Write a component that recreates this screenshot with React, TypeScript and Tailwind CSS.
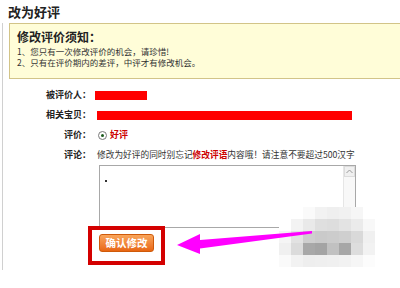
const mosaic = [
  ["#ffffff", "#ffffff", "#fafafa", "#f2f2f2", "#efefef", "#f1f1f1", "#f6f6f6", "#ffffff"],
  ["#ffffff", "#f3f3f3", "#e9e9e9", "#dfdfdf", "#dddddd", "#e3e3e3", "#ebebeb", "#f8f8f8"],
  ["#f5f5f5", "#e2e2e2", "#cecece", "#cacaca", "#cccccc", "#cfcfcf", "#d9d9d9", "#f0f0f0"],
  ["#f0f0f0", "#dbdbdb", "#a8a8a8", "#a4a4a4", "#c1c1c1", "#a7a7a7", "#dddddd", "#f2f2f2"],
  ["#fafafa", "#f2f2f2", "#eeeeee", "#efefef", "#f0f0f0", "#f2f2f2", "#f6f6f6", "#fcfcfc"],
];

function FormRow({ label, children }: { label: string; children: React.ReactNode }) {
  return (
    <div className="flex h-[20px] items-center">
      <span className="w-[88px] shrink-0 text-right text-[9px] font-bold leading-[12px] text-[#222]">
        {label}
      </span>
      {children}
    </div>
  );
}

export default function App() {
  return (
    <div className="relative h-[288px] w-[400px] overflow-hidden bg-white font-['Noto_Sans_CJK_SC','Noto_Sans',sans-serif] text-[#333]">
      <h1 className="h-[23px] pl-[8px] pt-[4px] text-[13px] font-bold leading-[16px] text-[#222]">
        改为好评
      </h1>

      <div className="ml-[2px] border-l border-[#d0d0d0] pb-[5px]">
        <div className="ml-[6px] h-[56px] border-y border-l border-[#d2c488] bg-[#fffdd8] pl-[7px] pt-[6px]">
          <p className="text-[12px] font-bold leading-[14px] text-[#222]">修改评价须知：</p>
          <p className="mt-[1px] text-[8.5px] leading-[12px]">1、您只有一次修改评价的机会，请珍惜!</p>
          <p className="-mt-[1px] text-[8.5px] leading-[12px]">2、只有在评价期内的差评，中评才有修改机会。</p>
        </div>

        <div className="mt-[6px]">
          <FormRow label="被评价人：">
            <div className="ml-[4px] h-[9px] w-[52px] bg-[#ff0000]" />
          </FormRow>
          <FormRow label="相关宝贝：">
            <div className="ml-[6px] h-[9px] w-[255px] bg-[#ff0000]" />
          </FormRow>
          <FormRow label="评价：">
            <span className="ml-[7px] flex h-[9px] w-[9px] items-center justify-center rounded-full border border-[#7a7a7a] bg-white">
              <span className="h-[3px] w-[3px] rounded-full bg-[#1d5b1d]" />
            </span>
            <span className="ml-[3px] text-[9px] font-bold leading-[12px] text-[#cc0000]">好评</span>
          </FormRow>
          <FormRow label="评论：">
            <span className="ml-[6px] whitespace-nowrap text-[8.7px] leading-[12px]">
              修改为好评的同时别忘记<b className="text-[#cc0000]">修改评语</b>内容哦！请注意不要超过500汉字
            </span>
          </FormRow>

          <div className="ml-[96px] flex h-[63px] w-[257px] border border-[#a8a8a8] bg-white">
            <div className="flex-1 pl-[5px] pt-[14px]">
              <div className="h-[2px] w-[2px] bg-[#333]" />
            </div>
            <div className="w-[12px] border-l border-[#e6e6e6] bg-[#f8f8f8]">
              <div className="flex h-[11px] items-center justify-center border border-[#dcdcdc] bg-[#f0f0f0]">
                <svg width="7" height="5" viewBox="0 0 7 5">
                  <path d="M0.5 4 L3.5 1 L6.5 4" fill="none" stroke="#9a9a9a" strokeWidth="1" />
                </svg>
              </div>
            </div>
          </div>

          <div className="ml-[85px] -mt-[2px] w-fit border-4 border-[#d40000] bg-white px-[7px] pb-[9px] pt-[4px]">
            <button
              type="button"
              className="flex h-[18px] w-[55px] items-center justify-center rounded-[3px] border border-[#cf5a0a] bg-gradient-to-b from-[#f9a55a] to-[#e86610] text-[10.5px] font-bold leading-[12px] text-white"
            >
              确认修改
            </button>
          </div>
        </div>
      </div>

      <div className="absolute left-[279px] top-[207px] grid grid-cols-8">
        {mosaic.flat().map((c, i) => (
          <div key={i} className="h-[12px] w-[12px]" style={{ backgroundColor: c }} />
        ))}
      </div>

      <svg className="pointer-events-none absolute left-0 top-0" width="400" height="288">
        <polygon
          points="177,245 200,234 200,240 312,231 312,233.5 200,248.5 200,254"
          fill="#ff00ff"
        />
      </svg>
    </div>
  );
}
